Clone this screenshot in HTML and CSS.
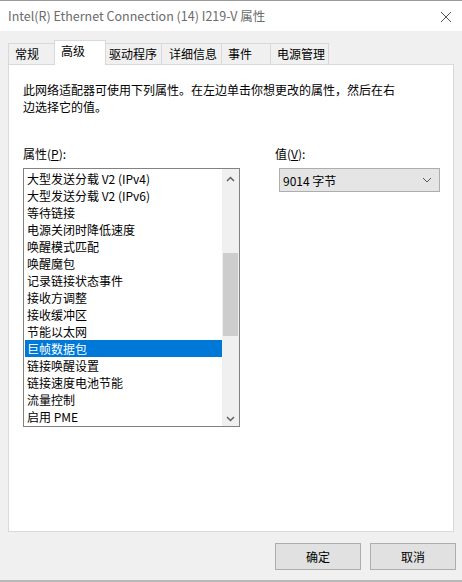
FILE: index.html
```html
<!DOCTYPE html>
<html lang="zh-CN">
<head>
<meta charset="utf-8">
<title>属性</title>
<link rel="stylesheet" href="styles.css">
</head>
<body>
<div class="window">
  <div class="titlebar">
    <span class="title">Intel(R) Ethernet Connection (14) I219-V 属性</span>
    <svg class="close" width="12" height="12" viewBox="0 0 12 12"><path d="M1 1L11 11M11 1L1 11" stroke="#555" stroke-width="1" fill="none"/></svg>
  </div>
  <div class="client">
    <div class="tabs">
      <div class="tab t1">常规</div>
      <div class="tab t2 active">高级</div>
      <div class="tab t3">驱动程序</div>
      <div class="tab t4">详细信息</div>
      <div class="tab t5">事件</div>
      <div class="tab t6">电源管理</div>
    </div>
    <div class="panel">
      <p class="desc">此网络适配器可使用下列属性。在左边单击你想更改的属性，然后在右<br>边选择它的值。</p>
      <div class="cols">
        <div class="col-left">
          <div class="label">属性(<u>P</u>):</div>
          <div class="listbox">
            <ul class="items">
              <li>大型发送分载 V2 (IPv4)</li>
              <li>大型发送分载 V2 (IPv6)</li>
              <li>等待链接</li>
              <li>电源关闭时降低速度</li>
              <li>唤醒模式匹配</li>
              <li>唤醒魔包</li>
              <li>记录链接状态事件</li>
              <li>接收方调整</li>
              <li>接收缓冲区</li>
              <li>节能以太网</li>
              <li class="selected">巨帧数据包</li>
              <li>链接唤醒设置</li>
              <li>链接速度电池节能</li>
              <li>流量控制</li>
              <li>启用 PME</li>
            </ul>
            <div class="scrollbar">
              <div class="arrow up"><svg width="9" height="6" viewBox="0 0 9 6"><path d="M1 5L4.5 1.5L8 5" stroke="#606060" stroke-width="1.5" fill="none"/></svg></div>
              <div class="track">
                <div class="thumb"></div>
              </div>
              <div class="arrow down"><svg width="9" height="6" viewBox="0 0 9 6"><path d="M1 1L4.5 4.5L8 1" stroke="#606060" stroke-width="1.5" fill="none"/></svg></div>
            </div>
          </div>
        </div>
        <div class="col-right">
          <div class="label">值(<u>V</u>):</div>
          <div class="combo">
            <span>9014 字节</span>
            <svg width="10" height="6" viewBox="0 0 10 6"><path d="M1 1L5 5L9 1" stroke="#555" stroke-width="1" fill="none"/></svg>
          </div>
        </div>
      </div>
    </div>
    <div class="buttons">
      <div class="btn">确定</div>
      <div class="btn">取消</div>
    </div>
  </div>
</div>
</body>
</html>
```

FILE: styles.css
```css
* { box-sizing: border-box; }
html, body { margin: 0; padding: 0; }
body {
  width: 462px;
  height: 582px;
  overflow: hidden;
  font-family: "Noto Sans CJK SC", "Noto Sans", sans-serif;
  font-size: 12px;
  color: #000;
  background: #f0f0f0;
}
.window {
  width: 462px;
  height: 582px;
  border-top: 1px solid #9a9a9a;
  border-bottom: 2px solid #b8b8b8;
  display: flex;
  flex-direction: column;
}
.titlebar {
  height: 30px;
  background: #fff;
  display: flex;
  align-items: center;
  justify-content: space-between;
  padding: 0 10px 0 8px;
}
.title {
  font-size: 12.5px;
  color: #6b6b6b;
  line-height: 16px;
}
.close { display: block; margin-top: 1px; }
.client {
  flex: 1;
  background: #f0f0f0;
  padding: 9px 0 0 8px;
}
.tabs {
  display: flex;
  align-items: flex-end;
  height: 24px;
}
.tab {
  height: 21px;
  border: 1px solid #d9d9d9;
  border-bottom: none;
  border-left: none;
  background: #f0f0f0;
  line-height: 19px;
  padding-left: 6px;
  white-space: nowrap;
}
.t1 { width: 47px; border-left: 1px solid #d9d9d9; }
.t3 { width: 57px; padding-left: 4px; }
.t4 { width: 60px; padding-left: 7px; }
.t5 { width: 49px; padding-left: 6px; }
.t6 { width: 58px; padding-left: 6px; }
.tab.active {
  width: 52px;
  height: 25px;
  margin: 0 -1px -1px -1px;
  border-left: 1px solid #d9d9d9;
  background: #fff;
  position: relative;
  z-index: 1;
  line-height: 20px;
  padding-left: 6px;
}
.panel {
  width: 446px;
  height: 468px;
  background: #fff;
  border: 1px solid #d9d9d9;
  padding: 16px 0 0 14px;
}
.desc {
  margin: 0;
  line-height: 17px;
}
.cols {
  display: flex;
  margin-top: 30px;
}
.label {
  line-height: 17px;
  height: 17px;
}
.label u { text-decoration: underline; text-underline-offset: 1px; }
.col-left { width: 217px; }
.col-right { margin-left: 35px; }
.listbox {
  margin-top: 6px;
  width: 217px;
  height: 259px;
  border: 1px solid #828282;
  display: flex;
}
.items {
  list-style: none;
  margin: 0;
  padding: 1px 0 0 1px;
  flex: 1;
}
.items li {
  height: 17px;
  line-height: 17px;
  padding-left: 2px;
  white-space: nowrap;
}
.items li.selected {
  background: #0078d7;
  color: #fff;
}
.scrollbar {
  width: 17px;
  background: #f0f0f0;
  display: flex;
  flex-direction: column;
}
.arrow {
  height: 17px;
  display: flex;
  align-items: center;
  justify-content: center;
}
.arrow svg { display: block; }
.arrow.up { padding-top: 3px; }
.arrow.down { padding-top: 3px; }
.track {
  flex: 1;
  padding: 67px 1px 0 1px;
}
.thumb {
  height: 83px;
  background: #cdcdcd;
}
.combo {
  margin-top: 6px;
  margin-left: 4px;
  width: 161px;
  height: 24px;
  background: #e5e5e5;
  border: 1px solid #adadad;
  display: flex;
  align-items: center;
  justify-content: space-between;
  padding: 0 7px 0 3px;
  line-height: 17px;
}
.combo svg { display: block; }
.buttons {
  display: flex;
  justify-content: flex-end;
  gap: 9px;
  margin-top: 11px;
  padding-right: 6px;
}
.btn {
  width: 86px;
  height: 27px;
  background: #e1e1e1;
  border: 1px solid #adadad;
  display: flex;
  align-items: center;
  justify-content: center;
  line-height: 17px;
}
```
